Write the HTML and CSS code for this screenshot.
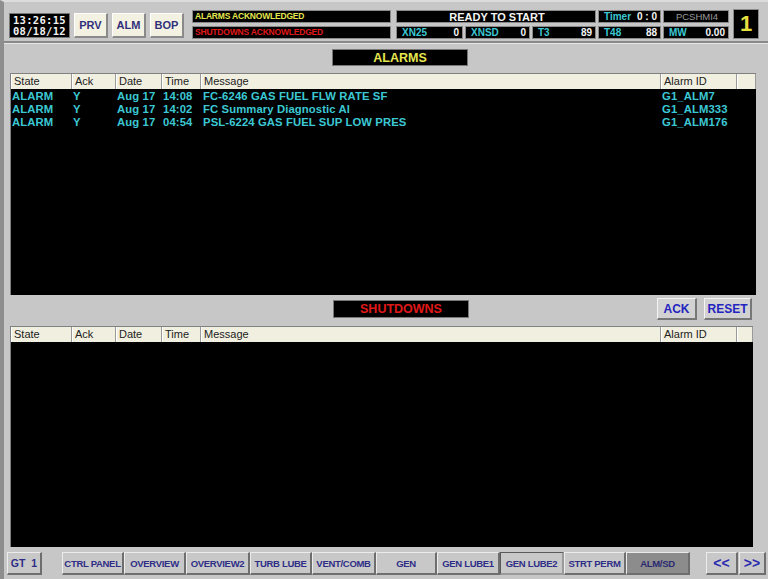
FILE: index.html
```html
<!DOCTYPE html>
<html>
<head>
<meta charset="utf-8">
<link rel="stylesheet" href="styles.css">
</head>
<body>
<div class="screen">
  <div class="header">
    <div class="clock"><div>13:26:15</div><div>08/18/12</div></div>
    <div class="hbtn">PRV</div>
    <div class="hbtn">ALM</div>
    <div class="hbtn">BOP</div>
    <div class="status">
      <div class="sbox yellow">ALARMS ACKNOWLEDGED</div>
      <div class="sbox red">SHUTDOWNS ACKNOWLEDGED</div>
    </div>
    <div class="grid">
      <div class="gbox ready">READY TO START</div>
      <div class="gbox"><span class="cyan">Timer</span><span class="val">0 : 0</span></div>
      <div class="gbox host">PCSHMI4</div>
      <div class="gbox"><span class="cyan">XN25</span><span class="val">0</span></div>
      <div class="gbox"><span class="cyan">XNSD</span><span class="val">0</span></div>
      <div class="gbox"><span class="cyan">T3</span><span class="val">89</span></div>
      <div class="gbox"><span class="cyan">T48</span><span class="val">88</span></div>
      <div class="gbox"><span class="cyan">MW</span><span class="val">0.00</span></div>
    </div>
    <div class="unit">1</div>
  </div>

  <div class="main">
    <div class="titlerow">
      <div class="title yellow">ALARMS</div>
    </div>
    <div class="table alarms">
      <div class="thead">
        <div class="th c-state">State</div>
        <div class="th c-ack">Ack</div>
        <div class="th c-date">Date</div>
        <div class="th c-time">Time</div>
        <div class="th c-msg">Message</div>
        <div class="th c-id">Alarm ID</div>
        <div class="th c-end"></div>
      </div>
      <div class="tbody">
        <div class="tr">
          <div class="td c-state">ALARM</div><div class="td c-ack">Y</div><div class="td c-date">Aug 17</div><div class="td c-time">14:08</div><div class="td c-msg">FC-6246 GAS FUEL FLW RATE SF</div><div class="td c-id">G1_ALM7</div>
        </div>
        <div class="tr">
          <div class="td c-state">ALARM</div><div class="td c-ack">Y</div><div class="td c-date">Aug 17</div><div class="td c-time">14:02</div><div class="td c-msg">FC Summary Diagnostic Al</div><div class="td c-id">G1_ALM333</div>
        </div>
        <div class="tr">
          <div class="td c-state">ALARM</div><div class="td c-ack">Y</div><div class="td c-date">Aug 17</div><div class="td c-time">04:54</div><div class="td c-msg">PSL-6224 GAS FUEL SUP LOW PRES</div><div class="td c-id">G1_ALM176</div>
        </div>
      </div>
    </div>

    <div class="sdrow">
      <div class="title red sdtitle">SHUTDOWNS</div>
      <div class="abtn ack">ACK</div>
      <div class="abtn reset">RESET</div>
    </div>
    <div class="table shutdowns">
      <div class="thead">
        <div class="th c-state">State</div>
        <div class="th c-ack">Ack</div>
        <div class="th c-date">Date</div>
        <div class="th c-time">Time</div>
        <div class="th c-msg">Message</div>
        <div class="th c-id">Alarm ID</div>
        <div class="th c-end"></div>
      </div>
      <div class="tbody"></div>
    </div>
  </div>

  <div class="nav">
    <div class="nbtn gt">GT &nbsp;1</div>
    <div class="navgroup">
      <div class="nbtn w62">CTRL PANEL</div>
      <div class="nbtn w62">OVERVIEW</div>
      <div class="nbtn w64">OVERVIEW2</div>
      <div class="nbtn w62">TURB LUBE</div>
      <div class="nbtn w64">VENT/COMB</div>
      <div class="nbtn w61">GEN</div>
      <div class="nbtn w63">GEN LUBE1</div>
      <div class="nbtn w64 pressed">GEN LUBE2</div>
      <div class="nbtn w62">STRT PERM</div>
      <div class="nbtn w64 active">ALM/SD</div>
    </div>
    <div class="nbtn arrow prev">&lt;&lt;</div>
    <div class="nbtn arrow next">&gt;&gt;</div>
  </div>
</div>
</body>
</html>
```
FILE: styles.css
```css
* { box-sizing: border-box; }
html, body { margin: 0; padding: 0; }
body {
  width: 768px;
  height: 579px;
  overflow: hidden;
  background: #c7c7c7;
  font-family: "Liberation Sans", Arial, sans-serif;
}
.screen {
  width: 768px;
  height: 579px;
  border-left: 4px solid #8e8e8e;
  border-top: 2px solid #dcdcdc;
  display: flex;
  flex-direction: column;
}
.header {
  height: 41px;
  display: flex;
  align-items: flex-start;
  padding: 7px 0 0 5px;
  border-bottom: 2px solid #8a8a8a;
  box-shadow: 0 1px 0 #e6e6e6;
}
.clock {
  width: 61px;
  height: 25px;
  margin-top: 4px;
  background: #000;
  border: 1px solid #777;
  color: #f4f4f4;
  font-family: "DejaVu Sans Mono", monospace;
  font-weight: bold;
  font-size: 10.5px;
  line-height: 11px;
  letter-spacing: 0.3px;
  padding: 1px 0 0 3px;
}
.hbtn {
  width: 34px;
  height: 25px;
  margin: 4px 0 0 4px;
  background: #f3f1e2;
  border-top: 1px solid #fff;
  border-left: 1px solid #fff;
  border-right: 2px solid #8a8a8a;
  border-bottom: 2px solid #8a8a8a;
  color: #30307a;
  font-weight: bold;
  font-size: 11px;
  display: flex;
  align-items: center;
  justify-content: center;
}
.status {
  margin: 1px 0 0 8px;
  display: flex;
  flex-direction: column;
  gap: 3px;
}
.sbox {
  width: 199px;
  height: 13px;
  background: #000;
  border: 1px solid #8a8a8a;
  font-size: 8.5px;
  font-weight: bold;
  line-height: 11px;
  padding-left: 2px;
  letter-spacing: -0.2px;
}
.yellow { color: #e6e650; }
.red { color: #e01818; }
.cyan { color: #3cc8d4; }
.grid {
  margin: 1px 0 0 5px;
  display: grid;
  grid-template-columns: 67px 65px 64px 63px 66px;
  grid-template-rows: 13px 13px;
  gap: 3px 2px;
}
.gbox {
  background: #000;
  border: 1px solid #8a8a8a;
  display: flex;
  justify-content: space-between;
  align-items: center;
  font-weight: bold;
  font-size: 10px;
  padding: 0 3px 0 5px;
  color: #f4f4f4;
}
.gbox .val { color: #f4f4f4; }
.gbox.ready {
  grid-column: span 3;
  justify-content: center;
  font-size: 11px;
}
.gbox.host {
  justify-content: center;
  color: #9a9a9a;
  font-weight: normal;
  font-size: 9.5px;
}
.unit {
  width: 26px;
  height: 30px;
  margin-left: 4px;
  background: #000;
  border: 1px solid #8a8a8a;
  color: #e8e040;
  font-weight: bold;
  font-size: 22px;
  display: flex;
  align-items: center;
  justify-content: center;
}
.main {
  padding-left: 6px;
  display: flex;
  flex-direction: column;
}
.titlerow {
  height: 17px;
  margin-top: 6px;
  display: flex;
}
.title {
  width: 136px;
  height: 17px;
  background: #000;
  border: 1px solid #777;
  font-weight: bold;
  font-size: 12.5px;
  display: flex;
  align-items: center;
  justify-content: center;
}
.titlerow .title { margin-left: 322px; }
.table {
  margin-top: 7px;
  width: 746px;
  height: 222px;
  background: #000;
  border-top: 1px solid #808080;
  border-left: 1px solid #808080;
  display: flex;
  flex-direction: column;
}
.table.shutdowns {
  width: 743px;
  height: 221px;
  margin-top: 6px;
}
.thead {
  display: flex;
  height: 15px;
  background: #f1efdf;
  flex: none;
}
.th {
  font-size: 11px;
  color: #222;
  line-height: 15px;
  padding-left: 3px;
  border-right: 1px solid #9a9a9a;
  box-shadow: inset 1px 0 0 #fff;
  white-space: nowrap;
  overflow: hidden;
}
.c-state { width: 61px; }
.c-ack { width: 44px; }
.c-date { width: 46px; }
.c-time { width: 39px; }
.c-msg { width: 460px; }
.c-id { width: 76px; }
.c-end { flex: 1; }
.tbody {
  flex: 1;
  padding-top: 1px;
}
.tr {
  display: flex;
  height: 13px;
}
.td {
  color: #3cc8d4;
  font-size: 11.3px;
  line-height: 13px;
  font-weight: bold;
  padding-left: 1px;
  white-space: nowrap;
  letter-spacing: 0.1px;
}
.td.c-msg { padding-left: 2px; }
.sdrow {
  height: 22px;
  margin-top: 3px;
  display: flex;
  align-items: flex-start;
}
.sdtitle {
  margin: 2px 0 0 323px;
  height: 18px;
  font-size: 12.5px;
}
.abtn {
  height: 22px;
  background: #d2d2d2;
  border-top: 1px solid #f4f4f4;
  border-left: 1px solid #f4f4f4;
  border-right: 2px solid #777;
  border-bottom: 2px solid #777;
  color: #2424c0;
  font-weight: bold;
  font-size: 12px;
  display: flex;
  align-items: center;
  justify-content: center;
}
.abtn.ack { width: 40px; margin-left: 188px; }
.abtn.reset { width: 48px; margin-left: 7px; }
.nav {
  margin-top: 5px;
  padding-left: 3px;
  display: flex;
  height: 23px;
}
.navgroup {
  display: flex;
  margin-left: 20px;
}
.nbtn {
  height: 23px;
  background: #c8c8c8;
  border-top: 1px solid #ececec;
  border-left: 1px solid #ececec;
  border-right: 2px solid #6e6e6e;
  border-bottom: 2px solid #6e6e6e;
  color: #2e2e86;
  font-weight: bold;
  font-size: 9.5px;
  letter-spacing: -0.3px;
  display: flex;
  align-items: center;
  justify-content: center;
  white-space: nowrap;
}
.nbtn.gt { width: 35px; font-size: 10.5px; letter-spacing: 0; }
.w61 { width: 61px; }
.w62 { width: 62px; }
.w63 { width: 63px; }
.w64 { width: 64px; }
.nbtn.pressed {
  border-top: 1px solid #5a5a5a;
  border-left: 1px solid #5a5a5a;
  border-right: 2px solid #9a9a9a;
  border-bottom: 2px solid #9a9a9a;
}
.nbtn.active { background: #8c8c8c; color: #2a2a70; }
.nbtn.arrow { font-size: 14px; letter-spacing: 0; color: #2a2ab0; }
.nbtn.prev { width: 32px; margin-left: 16px; }
.nbtn.next { width: 27px; margin-left: 1px; }
```
